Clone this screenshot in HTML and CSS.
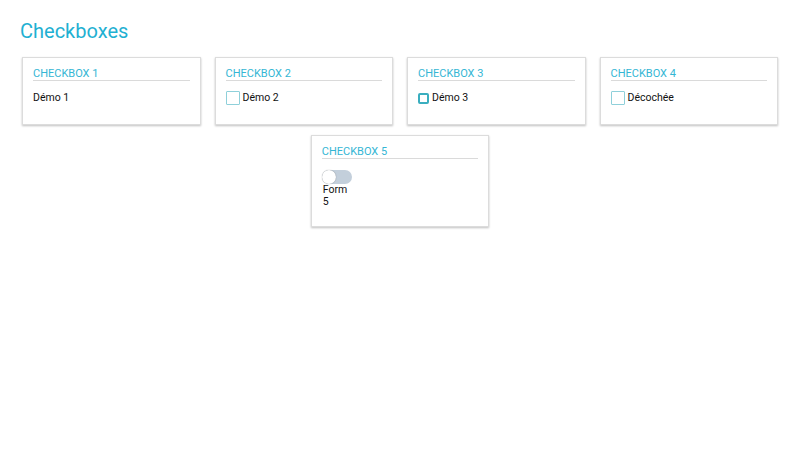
FILE: index.html
```html
<!DOCTYPE html>
<html>
<head>
<meta charset="utf-8">
<link rel="stylesheet" href="styles.css">
</head>
<body>
<h1 class="page-title">Checkboxes</h1>
<div class="cards">
  <div class="card">
    <div class="card-title">CHECKBOX 1</div>
    <div class="card-body"><span class="label">Démo 1</span></div>
  </div>
  <div class="card">
    <div class="card-title">CHECKBOX 2</div>
    <div class="card-body row"><span class="box box-light"></span><span class="label">Démo 2</span></div>
  </div>
  <div class="card">
    <div class="card-title">CHECKBOX 3</div>
    <div class="card-body row"><span class="box box-small"></span><span class="label">Démo 3</span></div>
  </div>
  <div class="card">
    <div class="card-title">CHECKBOX 4</div>
    <div class="card-body row"><span class="box box-light"></span><span class="label">Décochée</span></div>
  </div>
  <div class="card card-tall">
    <div class="card-title">CHECKBOX 5</div>
    <div class="card-body">
      <span class="toggle"><span class="knob"></span></span>
      <span class="label narrow">Form 5</span>
    </div>
  </div>
</div>
</body>
</html>
```
FILE: styles.css
```css
html, body {
  margin: 0;
  padding: 0;
  background: #fff;
  font-family: Roboto, "Liberation Sans", sans-serif;
  color: #111;
}
.page-title {
  margin: 0;
  padding: 19px 0 0 20px;
  font-size: 20px;
  line-height: 24px;
  font-weight: 400;
  color: #1fb0d2;
}
.cards {
  display: flex;
  flex-wrap: wrap;
  justify-content: center;
  padding: 7px 15px 0;
}
.card {
  box-sizing: border-box;
  width: 178.5px;
  margin: 7px 7px 3px;
  height: 68px;
  border: 1px solid #dcdcdc;
  box-shadow: 0 1px 2px rgba(0,0,0,0.25);
  padding: 9px 10px 0;
  background: #fff;
}
.card-tall {
  height: 92px;
}
.card-title {
  font-size: 11px;
  line-height: 13px;
  color: #35b6d4;
  border-bottom: 1px solid #dadada;
  padding-bottom: 0;
}
.card-body {
  padding-top: 10px;
  font-size: 10.5px;
  line-height: 14px;
}
.row {
  display: flex;
  align-items: center;
}
.label {
  color: #111;
}
.box {
  box-sizing: border-box;
  display: inline-block;
  flex: none;
}
.box-light {
  width: 14px;
  height: 14px;
  border: 1px solid #8fd0da;
  border-radius: 1px;
  margin-right: 3px;
}
.box-small {
  width: 11px;
  height: 11px;
  border: 2px solid #3aaebf;
  border-radius: 2px;
  margin-right: 3px;
}
.card-tall .card-body {
  padding-top: 11px;
}
.toggle {
  display: block;
  position: relative;
  width: 30px;
  height: 14px;
  border-radius: 7px;
  background: #c3cfdb;
}
.knob {
  position: absolute;
  left: 0;
  top: 0;
  width: 14px;
  height: 14px;
  border-radius: 50%;
  background: #fff;
  box-shadow: 0 0 1px rgba(0,0,0,0.45);
}
.narrow {
  display: block;
  width: 28px;
  padding-left: 1px;
  line-height: 12px;
}
```
